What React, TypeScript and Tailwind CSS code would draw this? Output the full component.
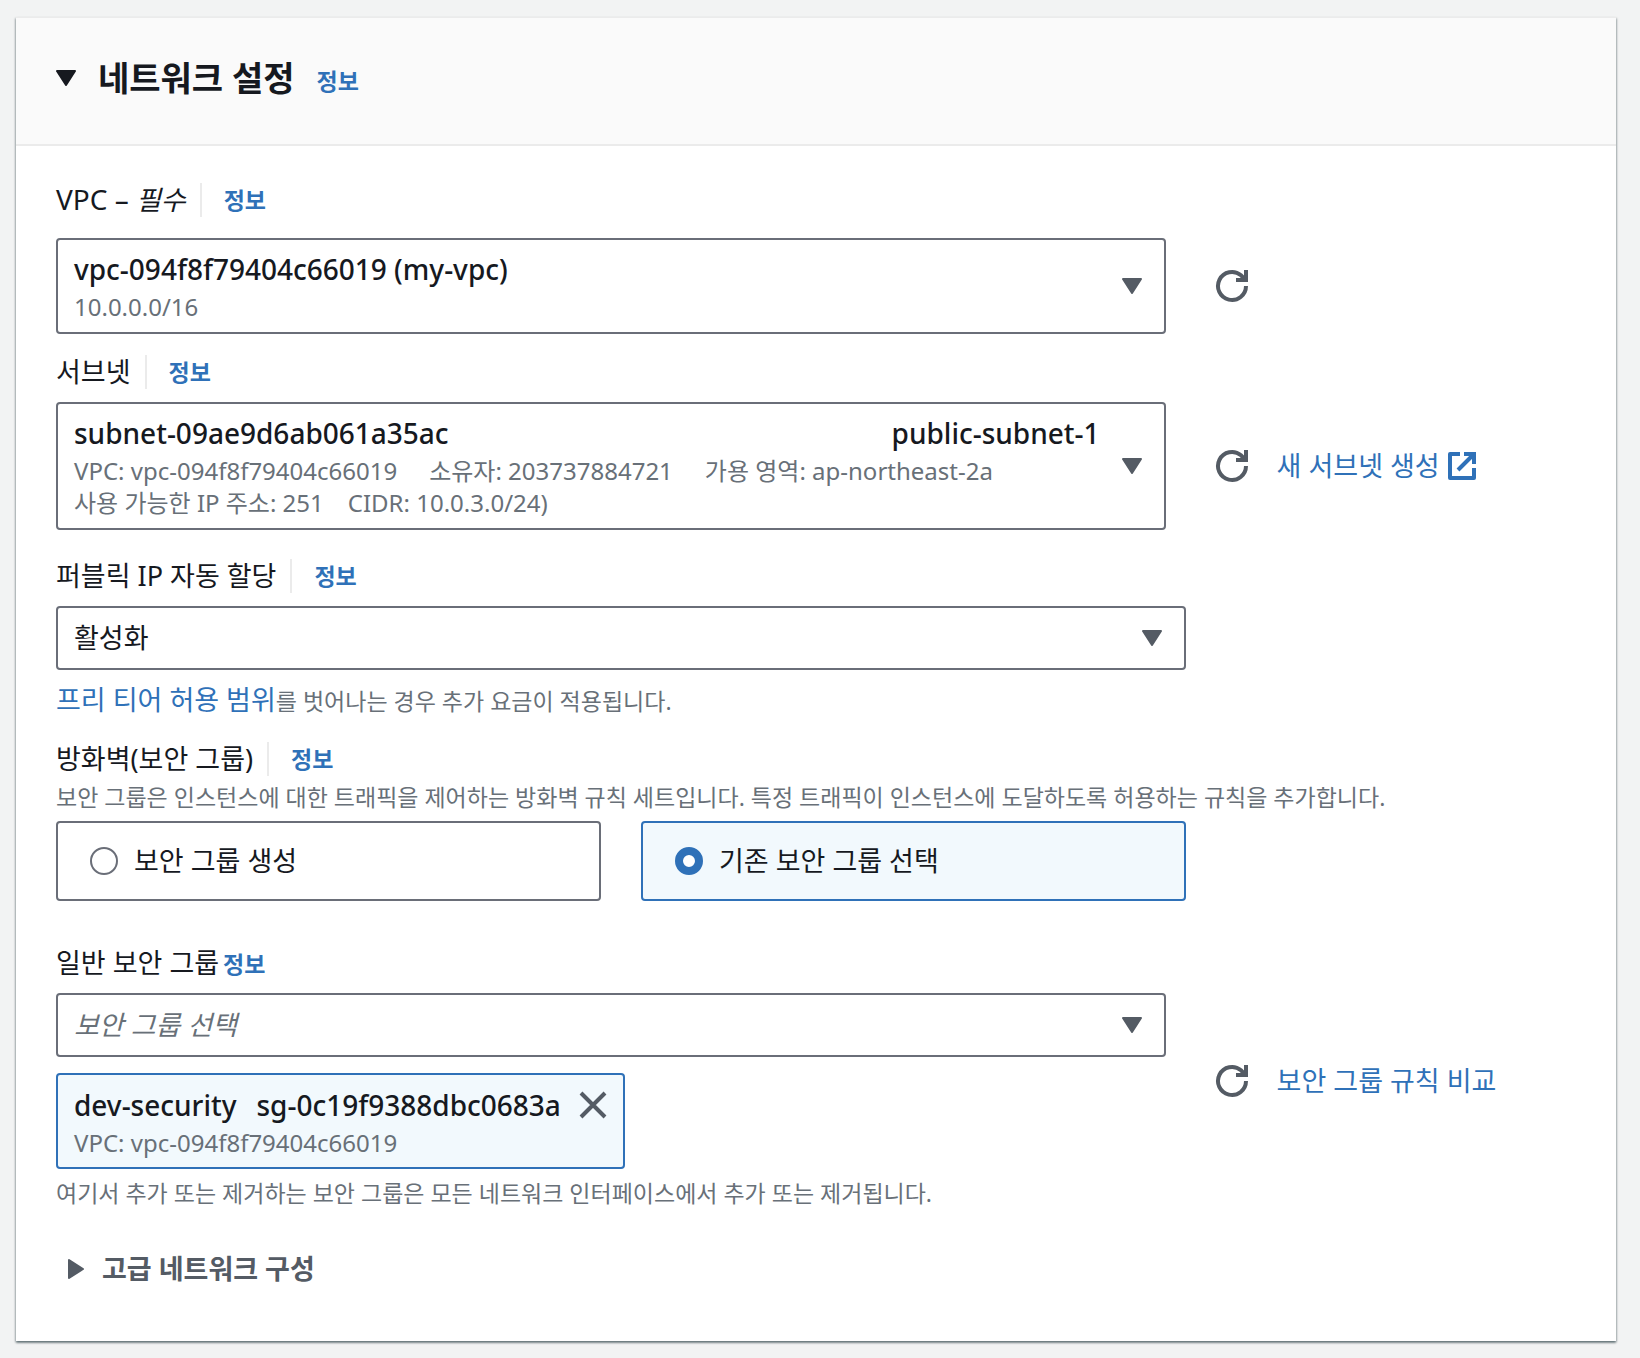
import React, { useState } from 'react';

const FONT = "font-['Noto_Sans','Noto_Sans_CJK_KR',sans-serif]";

interface InfoLinkProps {
    divided?: boolean;
}

const InfoLink: React.FC<InfoLinkProps> = ({ divided }) => (
    <span className={divided ? 'flex items-center ml-3.5 pl-[22px] h-[34px] border-l-2 border-[#ebebeb]' : 'ml-1'}>
        <a href="#info" className="text-[23px] leading-8 font-bold text-[#2f71b8] hover:underline">정보</a>
    </span>
);

const CaretDown: React.FC<{ className?: string }> = ({ className }) => (
    <svg viewBox="0 0 20 16" className={className} fill="currentColor" stroke="currentColor" strokeWidth="2" strokeLinejoin="round" aria-hidden="true">
        <path d="M1 1h18l-9 14z" />
    </svg>
);

const RefreshButton: React.FC = () => (
    <button type="button" aria-label="새로 고침" className="shrink-0 text-[#545b64] hover:text-[#16191f]">
        <svg viewBox="0 0 34 34" className="size-[34px]" fill="none" stroke="currentColor" strokeWidth="4" aria-hidden="true">
            <path d="M31 17a14 14 0 1 1-5-10.700l4 4" />
            <path d="M31 1v10H21" />
        </svg>
    </button>
);

const ExternalIcon: React.FC = () => (
    <svg viewBox="0 0 28 28" className="size-7 ml-2" fill="none" stroke="currentColor" strokeWidth="4" strokeLinejoin="round" aria-hidden="true">
        <path d="M12 2H2v24h24V16" />
        <path d="M16 2h10v10M26 2L10 18" strokeLinejoin="miter" />
    </svg>
);

const App: React.FC = () => {
    const [open, setOpen] = useState(true);
    const [mode, setMode] = useState('existing');
    const [hasToken, setHasToken] = useState(true);

    const tiles = [
        { value: 'create', label: '보안 그룹 생성' },
        { value: 'existing', label: '기존 보안 그룹 선택' },
    ];

    return (
        <div className={`${FONT} min-h-screen bg-[#f2f3f3] px-4 pt-[17px] pb-4 pr-6 text-[27px] leading-9 text-[#16191f]`}>
            <section className="bg-white border-t border-[#ebebeb] shadow-[0_2px_2px_0_rgba(0,28,36,0.4),1px_1px_2px_0_rgba(0,28,36,0.2),-1px_1px_2px_0_rgba(0,28,36,0.2)]">
                {/* Header */}
                <header className="flex items-center h-[128px] px-10 pb-1.5 bg-[#fafafa] border-b-2 border-[#ebebeb]">
                    <h2 className="text-[34px] leading-[44px] font-bold">
                        <button type="button" className="flex items-center gap-[22px]" aria-expanded={open} onClick={() => setOpen(!open)}>
                            <CaretDown className="w-5 h-4" />
                            네트워크 설정
                        </button>
                    </h2>
                    <a href="#info" className="ml-[22px] mt-1.5 text-[23px] leading-8 font-bold text-[#2f71b8] hover:underline">정보</a>
                </header>

                {open && (
                    <div className="px-10 pt-[35px] pb-[54px]">
                        {/* VPC */}
                        <div className="flex items-center">
                            <label htmlFor="vpc"><span className="text-[28px]">VPC – </span><em>필수</em></label>
                            <InfoLink divided />
                        </div>
                        <div className="mt-5 flex items-center gap-[49px]">
                            <button id="vpc" type="button" aria-haspopup="listbox" className="basis-[73%] flex items-center justify-between h-24 pl-4 pr-[22px] text-left border-2 border-[#6a6e78] rounded">
                                <span className="pt-0.5">
                                    <span className="block text-[28px] font-medium">vpc-094f8f79404c66019 (my-vpc)</span>
                                    <span className="block pt-1 text-2xl text-[#687078]">10.0.0.0/16</span>
                                </span>
                                <CaretDown className="w-5 h-4 text-[#545b64]" />
                            </button>
                            <RefreshButton />
                        </div>

                        {/* Subnet */}
                        <div className="mt-5 flex items-center">
                            <label htmlFor="subnet">서브넷</label>
                            <InfoLink divided />
                        </div>
                        <div className="mt-3 flex items-center gap-[49px]">
                            <button id="subnet" type="button" aria-haspopup="listbox" className="basis-[73%] flex items-center h-32 pl-4 pr-[22px] text-left border-2 border-[#6a6e78] rounded">
                                <span className="flex-1 pt-0.5">
                                    <span className="flex justify-between pr-[22px] text-[28px] font-medium">
                                        <span>subnet-09ae9d6ab061a35ac</span>
                                        <span>public-subnet-1</span>
                                    </span>
                                    <span className="flex gap-8 pt-1 text-2xl text-[#687078]">
                                        <span>VPC: vpc-094f8f79404c66019</span>
                                        <span>소유자: 203737884721</span>
                                        <span>가용 영역: ap-northeast-2a</span>
                                    </span>
                                    <span className="flex gap-6 text-2xl text-[#687078]">
                                        <span>사용 가능한 IP 주소: 251</span>
                                        <span>CIDR: 10.0.3.0/24)</span>
                                    </span>
                                </span>
                                <CaretDown className="w-5 h-4 text-[#545b64]" />
                            </button>
                            <div className="flex items-center gap-7">
                                <RefreshButton />
                                <a href="#create-subnet" className="flex items-center text-[#2f71b8] hover:underline">
                                    새 서브넷 생성
                                    <ExternalIcon />
                                </a>
                            </div>
                        </div>

                        {/* Public IP */}
                        <div className="mt-7 flex items-center">
                            <label htmlFor="public-ip">퍼블릭 IP 자동 할당</label>
                            <InfoLink divided />
                        </div>
                        <div className="mt-3 grid grid-cols-12 gap-x-10">
                            <div className="relative col-span-9">
                                <select id="public-ip" className="appearance-none block w-full h-16 px-4 bg-white border-2 border-[#6a6e78] rounded">
                                    <option>활성화</option>
                                    <option>비활성화</option>
                                </select>
                                <CaretDown className="absolute right-6 top-6 w-5 h-4 text-[#545b64] pointer-events-none" />
                            </div>
                        </div>
                        <p className="mt-3 text-[23px] text-[#687078]">
                            <a href="#free-tier" className="text-[27px] text-[#2f71b8] hover:underline">프리 티어 허용 범위</a>를 벗어나는 경우 추가 요금이 적용됩니다.
                        </p>

                        {/* Firewall */}
                        <div className="mt-[22px] flex items-center">
                            <span id="firewall">방화벽(보안 그룹)</span>
                            <InfoLink divided />
                        </div>
                        <p className="mt-0.5 text-[23px] text-[#687078]">보안 그룹은 인스턴스에 대한 트래픽을 제어하는 방화벽 규칙 세트입니다. 특정 트래픽이 인스턴스에 도달하도록 허용하는 규칙을 추가합니다.</p>
                        <div className="mt-1.5 grid grid-cols-12 gap-x-10">
                            <div role="radiogroup" aria-labelledby="firewall" className="col-span-9 grid grid-cols-2 gap-10">
                                {tiles.map((tile) => (
                                    <label
                                        key={tile.value}
                                        className={`flex items-center gap-4 h-20 px-8 border-2 rounded ${mode === tile.value ? 'bg-[#f2f9fd] border-[#2f71b8]' : 'bg-white border-[#6a6e78]'}`}
                                    >
                                        <input
                                            type="radio"
                                            name="security-group-mode"
                                            value={tile.value}
                                            checked={mode === tile.value}
                                            onChange={() => setMode(tile.value)}
                                            className="appearance-none size-7 rounded-full bg-white border-2 border-[#6a6e78] checked:border-8 checked:border-[#2f71b8]"
                                        />
                                        {tile.label}
                                    </label>
                                ))}
                            </div>
                        </div>

                        {/* Security groups */}
                        <div className="mt-11 flex items-center">
                            <label htmlFor="security-group">일반 보안 그룹</label>
                            <InfoLink />
                        </div>
                        <div className="mt-3 flex items-center gap-[49px]">
                            <div className="basis-[73%]">
                                <div className="relative">
                                    <select id="security-group" className="appearance-none block w-full h-16 px-4 bg-white border-2 border-[#6a6e78] rounded italic text-[#687078]">
                                        <option>보안 그룹 선택</option>
                                    </select>
                                    <CaretDown className="absolute right-6 top-6 w-5 h-4 text-[#545b64] pointer-events-none" />
                                </div>
                                {hasToken && (
                                    <div className="mt-4 inline-flex items-start gap-[18px] h-24 pl-4 pr-4 pt-3 bg-[#f2f9fd] border-2 border-[#2f71b8] rounded">
                                        <div>
                                            <div className="flex gap-5 text-[28px] font-medium">
                                                <span>dev-security</span>
                                                <span>sg-0c19f9388dbc0683a</span>
                                            </div>
                                            <div className="pt-1 text-2xl text-[#687078]">VPC: vpc-094f8f79404c66019</div>
                                        </div>
                                        <button type="button" aria-label="제거" className="mt-1 text-[#545b64]" onClick={() => setHasToken(false)}>
                                            <svg viewBox="0 0 28 28" className="size-7" stroke="currentColor" strokeWidth="4" aria-hidden="true">
                                                <path d="M2 2l24 24M26 2L2 26" />
                                            </svg>
                                        </button>
                                    </div>
                                )}
                            </div>
                            <div className="flex items-center gap-7">
                                <RefreshButton />
                                <a href="#compare" className="text-[#2f71b8] hover:underline">보안 그룹 규칙 비교</a>
                            </div>
                        </div>
                        <p className="mt-1.5 text-[23px] text-[#687078]">여기서 추가 또는 제거하는 보안 그룹은 모든 네트워크 인터페이스에서 추가 또는 제거됩니다.</p>

                        {/* Advanced */}
                        <button type="button" aria-expanded={false} className="mt-10 ml-2.5 flex items-center gap-4 font-bold text-[#545b64]">
                            <CaretDown className="w-5 h-4 -rotate-90" />
                            고급 네트워크 구성
                        </button>
                    </div>
                )}
            </section>
        </div>
    );
};

export default App;
